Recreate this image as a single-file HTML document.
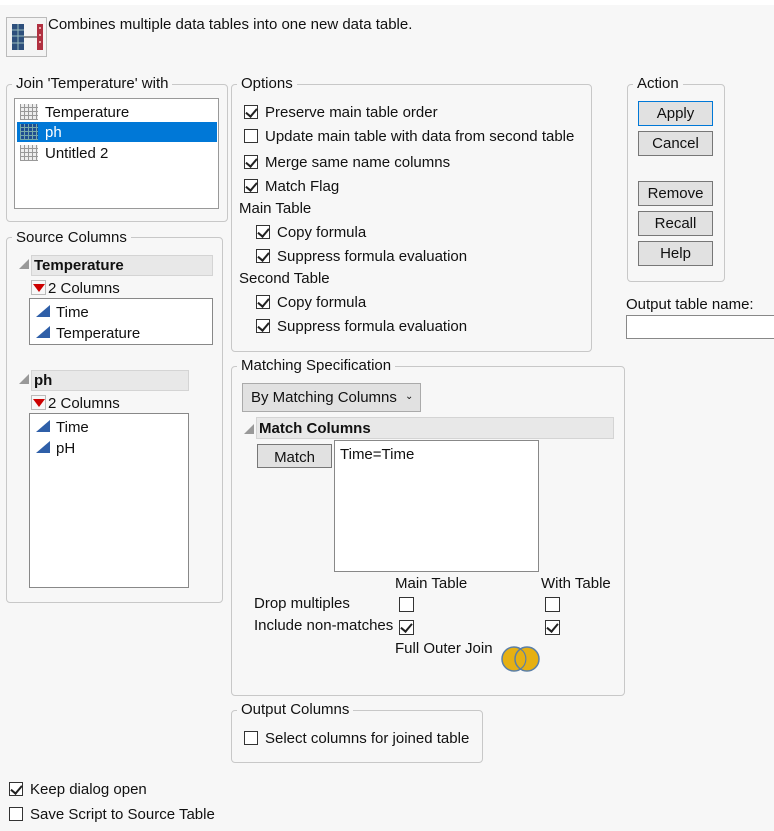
<!DOCTYPE html>
<html><head><style>
*{box-sizing:border-box;margin:0;padding:0}
body{width:774px;height:831px;background:#f7f7f7;position:relative;overflow:hidden;font-family:"Liberation Sans",sans-serif;font-size:15px;color:#111}
.t{position:absolute;white-space:nowrap;line-height:20px}
.g{position:absolute;border:1px solid #c8c8c8;border-radius:4px}
.lg{position:absolute;background:#f7f7f7;padding:0 4px;white-space:nowrap;line-height:18px}
.cb{position:absolute;width:14px;height:14px;border:1px solid #333;background:#fff}
.cb.c::after{content:"";position:absolute;left:3px;top:0px;width:5px;height:9px;border:solid #222;border-width:0 2px 2px 0;transform:rotate(40deg)}
.btn{position:absolute;border:1px solid #777;background:#e1e1e1;text-align:center;line-height:24px;font-size:15px}
.box{position:absolute;background:#fff;border:1px solid #888}
.tri{position:absolute;width:0;height:0;border-left:14px solid transparent;border-bottom:12px solid #2f5fa8}
.gt{position:absolute;width:18px;height:16px;background:repeating-linear-gradient(90deg,#999 0 1px,transparent 1px 4px),repeating-linear-gradient(0deg,#999 0 1px,#eee 1px 4px)}
.hdr{position:absolute;background:#e8e8e8;border:1px solid #d4d4d4;font-weight:bold;line-height:20px;padding-left:2px}
.dt{position:absolute;width:0;height:0;border-left:6px solid transparent;border-right:6px solid transparent;border-top:8px solid #c00}
.ot{position:absolute;width:0;height:0;border-left:10px solid transparent;border-bottom:10px solid #999}
</style></head><body>
<div style="position:absolute;left:0;top:0;width:774px;height:5px;background:#fff"></div>
<div style="position:absolute;left:6px;top:17px;width:41px;height:40px;border:1px solid #bbb;background:#f4f4f4">
<svg width="39" height="38"><rect x="5" y="6" width="12" height="26" fill="#2d4f7c"/><g stroke="#9bb" stroke-width="1"><line x1="11" y1="6" x2="11" y2="32"/><line x1="5" y1="12" x2="17" y2="12"/><line x1="5" y1="18" x2="17" y2="18"/><line x1="5" y1="25" x2="17" y2="25"/></g><line x1="17" y1="19" x2="30" y2="19" stroke="#333"/><rect x="30" y="6" width="6" height="26" fill="#b03040"/><g fill="#eaa"><rect x="32" y="9" width="2" height="2"/><rect x="32" y="16" width="2" height="2"/><rect x="32" y="23" width="2" height="2"/></g></svg></div>
<div class="t" style="left:48px;top:15px">Combines multiple data tables into one new data table.</div>

<div class="g" style="left:6px;top:84px;width:222px;height:138px"></div>
<div class="lg" style="left:12px;top:75px">Join 'Temperature' with</div>
<div class="box" style="left:14px;top:98px;width:205px;height:111px;border-color:#999"></div>
<div class="gt" style="left:20px;top:104px"></div><div class="t" style="left:45px;top:103px">Temperature</div>
<div style="position:absolute;left:17px;top:122px;width:200px;height:20px;background:#0078d7"></div>
<div class="gt" style="left:20px;top:124px;background:repeating-linear-gradient(90deg,#7aa 0 1px,transparent 1px 4px),repeating-linear-gradient(0deg,#7aa 0 1px,#1f4e90 1px 4px)"></div><div class="t" style="left:45px;top:123px;color:#fff">ph</div>
<div class="gt" style="left:20px;top:145px"></div><div class="t" style="left:45px;top:144px">Untitled 2</div>

<div class="g" style="left:6px;top:237px;width:217px;height:366px"></div>
<div class="lg" style="left:12px;top:229px">Source Columns</div>
<div class="ot" style="left:19px;top:259px"></div>
<div class="hdr" style="left:31px;top:255px;width:182px;height:21px">Temperature</div>
<div class="dt" style="left:33px;top:284px"></div><div class="cb" style="left:31px;top:280px;width:15px;height:15px;border-color:#bbb;background:transparent"></div>
<div class="t" style="left:48px;top:279px">2 Columns</div>
<div class="box" style="left:29px;top:298px;width:184px;height:47px"></div>
<div class="tri" style="left:36px;top:305px"></div><div class="t" style="left:56px;top:303px">Time</div>
<div class="tri" style="left:36px;top:326px"></div><div class="t" style="left:56px;top:324px">Temperature</div>
<div class="ot" style="left:19px;top:374px"></div>
<div class="hdr" style="left:31px;top:370px;width:158px;height:21px">ph</div>
<div class="dt" style="left:33px;top:399px"></div><div class="cb" style="left:31px;top:395px;width:15px;height:15px;border-color:#bbb;background:transparent"></div>
<div class="t" style="left:48px;top:394px">2 Columns</div>
<div class="box" style="left:29px;top:413px;width:160px;height:175px"></div>
<div class="tri" style="left:36px;top:420px"></div><div class="t" style="left:56px;top:418px">Time</div>
<div class="tri" style="left:36px;top:441px"></div><div class="t" style="left:56px;top:439px">pH</div>

<div class="g" style="left:231px;top:84px;width:361px;height:268px"></div>
<div class="lg" style="left:237px;top:75px">Options</div>
<div class="cb c" style="left:244px;top:105px"></div><div class="t" style="left:265px;top:103px">Preserve main table order</div>
<div class="cb" style="left:244px;top:129px"></div><div class="t" style="left:265px;top:127px">Update main table with data from second table</div>
<div class="cb c" style="left:244px;top:155px"></div><div class="t" style="left:265px;top:153px">Merge same name columns</div>
<div class="cb c" style="left:244px;top:179px"></div><div class="t" style="left:265px;top:177px">Match Flag</div>
<div class="t" style="left:239px;top:199px">Main Table</div>
<div class="cb c" style="left:256px;top:225px"></div><div class="t" style="left:277px;top:223px">Copy formula</div>
<div class="cb c" style="left:256px;top:249px"></div><div class="t" style="left:277px;top:247px">Suppress formula evaluation</div>
<div class="t" style="left:239px;top:269px">Second Table</div>
<div class="cb c" style="left:256px;top:295px"></div><div class="t" style="left:277px;top:293px">Copy formula</div>
<div class="cb c" style="left:256px;top:319px"></div><div class="t" style="left:277px;top:317px">Suppress formula evaluation</div>

<div class="g" style="left:627px;top:84px;width:98px;height:198px"></div>
<div class="lg" style="left:633px;top:75px">Action</div>
<div class="btn" style="left:638px;top:101px;width:75px;height:25px;border-color:#0078d7">Apply</div>
<div class="btn" style="left:638px;top:131px;width:75px;height:25px">Cancel</div>
<div class="btn" style="left:638px;top:181px;width:75px;height:25px">Remove</div>
<div class="btn" style="left:638px;top:211px;width:75px;height:25px">Recall</div>
<div class="btn" style="left:638px;top:241px;width:75px;height:25px">Help</div>
<div class="t" style="left:626px;top:295px">Output table name:</div>
<div class="box" style="left:626px;top:315px;width:150px;height:24px"></div>

<div class="g" style="left:231px;top:366px;width:394px;height:330px"></div>
<div class="lg" style="left:237px;top:357px">Matching Specification</div>
<div class="btn" style="left:242px;top:383px;width:179px;height:29px;text-align:left;padding-left:8px;line-height:28px;border-color:#aaa">By Matching Columns <span style="position:absolute;left:162px;top:-1px;font-size:10px">&#8964;</span></div>
<div class="ot" style="left:244px;top:424px"></div>
<div class="hdr" style="left:256px;top:417px;width:358px;height:22px;line-height:21px">Match Columns</div>
<div class="btn" style="left:257px;top:444px;width:75px;height:24px;line-height:25px">Match</div>
<div class="box" style="left:334px;top:440px;width:205px;height:132px"></div>
<div class="t" style="left:340px;top:445px">Time=Time</div>
<div class="t" style="left:395px;top:574px">Main Table</div>
<div class="t" style="left:541px;top:574px">With Table</div>
<div class="t" style="left:254px;top:594px">Drop multiples</div>
<div class="cb" style="left:399px;top:597px;width:15px;height:15px"></div>
<div class="cb" style="left:545px;top:597px;width:15px;height:15px"></div>
<div class="t" style="left:254px;top:616px">Include non-matches</div>
<div class="cb c" style="left:399px;top:620px;width:15px;height:15px"></div>
<div class="cb c" style="left:545px;top:620px;width:15px;height:15px"></div>
<div class="t" style="left:395px;top:639px">Full Outer Join</div>
<svg style="position:absolute;left:500px;top:645px" width="42" height="28"><circle cx="14" cy="14" r="12" fill="#e6b012" stroke="#5a7fa8" stroke-width="1.5"/><circle cx="27" cy="14" r="12" fill="#e6b012" stroke="#5a7fa8" stroke-width="1.5"/><path d="M20.5 4 A12 12 0 0 1 20.5 24" fill="none" stroke="#5a7fa8" stroke-width="1.2"/></svg>

<div class="g" style="left:231px;top:710px;width:252px;height:53px"></div>
<div class="lg" style="left:237px;top:701px">Output Columns</div>
<div class="cb" style="left:244px;top:731px"></div><div class="t" style="left:265px;top:729px">Select columns for joined table</div>

<div class="cb c" style="left:9px;top:782px"></div><div class="t" style="left:30px;top:780px">Keep dialog open</div>
<div class="cb" style="left:9px;top:807px"></div><div class="t" style="left:30px;top:805px">Save Script to Source Table</div>
</body></html>
